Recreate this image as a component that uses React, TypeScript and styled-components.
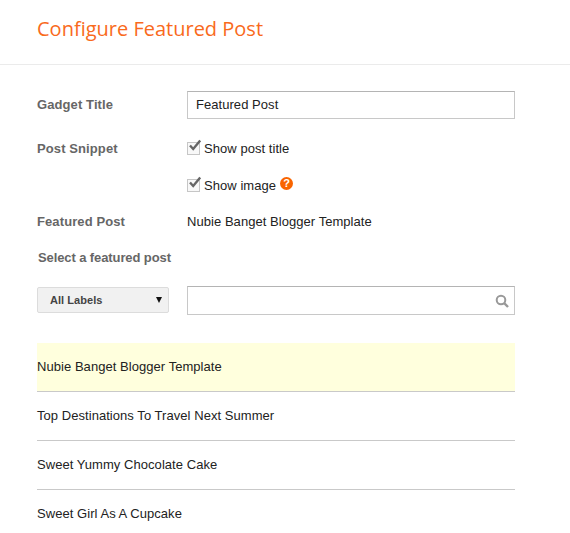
import React from "react";
import styled, { createGlobalStyle } from "styled-components";

const Global = createGlobalStyle`
    html, body {
        margin: 0;
        padding: 0;
        background: #fff;
        font-family: "Liberation Sans", Arial, sans-serif;
        overflow: hidden;
    }
`;

const POSTS = [
    "Nubie Banget Blogger Template",
    "Top Destinations To Travel Next Summer",
    "Sweet Yummy Chocolate Cake",
    "Sweet Girl As A Cupcake",
];

function Check() {
    return (
        <CheckBox>
            <svg width="15" height="14" viewBox="0 0 15 14">
                <path d="M3 6.5 L6.2 10 L13.2 1.5" fill="none" stroke="#666" strokeWidth="2.4" />
            </svg>
        </CheckBox>
    );
}

export default function App() {
    return (
        <Page>
            <Global />
            <Header>
                <Heading>Configure Featured Post</Heading>
            </Header>
            <Body>
                <Row $height={28} $mb={19}>
                    <Label $up={2}>Gadget Title</Label>
                    <TextInput>Featured Post</TextInput>
                </Row>
                <Row $height={20} $mb={17}>
                    <Label>Post Snippet</Label>
                    <CheckLine><Check />Show post title</CheckLine>
                </Row>
                <Row $height={20} $mb={16}>
                    <Label />
                    <CheckLine>
                        <Check />Show image
                        <Help>?</Help>
                    </CheckLine>
                </Row>
                <Row $height={20} $mb={19}>
                    <Label>Featured Post</Label>
                    <Value>Nubie Banget Blogger Template</Value>
                </Row>
                <SelectHeading>Select a featured post</SelectHeading>
                <Row $height={29} $mb={28}>
                    <LabelSelect>
                        All Labels
                        <Arrow />
                    </LabelSelect>
                    <SearchInput>
                        <svg width="14" height="14" viewBox="0 0 14 14">
                            <circle cx="6" cy="6" r="4.3" fill="none" stroke="#999" strokeWidth="2" />
                            <path d="M9.2 9.2 L13 13" stroke="#999" strokeWidth="2.4" />
                        </svg>
                    </SearchInput>
                </Row>
                <PostList>
                    {POSTS.map((title, i) => (
                        <PostItem key={title} $selected={i === 0}>{title}</PostItem>
                    ))}
                </PostList>
            </Body>
        </Page>
    );
}

const Page = styled.div`
    width: 570px;
    height: 533px;
    overflow: hidden;
    color: #222;
    font-size: 13px;
    letter-spacing: 0.05px;
`;

const Header = styled.div`
    box-sizing: content-box;
    height: 57px;
    padding: 0 0 7px 37px;
    border-bottom: 1px solid #ebebeb;
    display: flex;
    align-items: center;
`;

const Heading = styled.h1`
    margin: 0;
    font-size: 20px;
    font-weight: 400;
    color: #f96a1c;
    font-family: "Open Sans", sans-serif;
    letter-spacing: 0;
`;

const Body = styled.div`
    padding: 26px 55px 0 37px;
`;

const Row = styled.div<{ $height: number; $mb: number }>`
    display: flex;
    align-items: center;
    height: ${p => p.$height}px;
    margin-bottom: ${p => p.$mb}px;
`;

const Label = styled.div<{ $up?: number }>`
    width: 150px;
    flex: none;
    font-size: 13px;
    font-weight: 700;
    color: #666;
    letter-spacing: 0.1px;
    margin-bottom: ${p => p.$up ?? 0}px;
`;

const TextInput = styled.div`
    box-sizing: border-box;
    flex: 1;
    height: 28px;
    border: 1px solid #c8c8c8;
    border-top-color: #b4b4b4;
    padding-left: 8px;
    line-height: 26px;
`;

const CheckLine = styled.div`
    display: flex;
    align-items: center;
`;

const CheckBox = styled.span`
    position: relative;
    box-sizing: border-box;
    width: 13px;
    height: 13px;
    margin-right: 4px;
    border: 1px solid #c6c6c6;
    background: #f8f8f8;

    svg {
        position: absolute;
        left: -1px;
        top: -4px;
    }
`;

const Help = styled.span`
    width: 13px;
    height: 13px;
    margin-left: 4px;
    margin-top: -3px;
    border-radius: 50%;
    background: #f96400;
    color: #fff;
    font-size: 11px;
    font-weight: 700;
    line-height: 13px;
    text-align: center;
`;

const Value = styled.div``;

const SelectHeading = styled.div`
    margin: 0 0 20px 1px;
    height: 16px;
    font-size: 13px;
    font-weight: 700;
    color: #666;
    line-height: 16px;
    letter-spacing: -0.1px;
`;

const LabelSelect = styled.div`
    box-sizing: border-box;
    width: 132px;
    height: 26px;
    flex: none;
    align-self: flex-start;
    margin: 1px 18px 0 0;
    padding: 0 6px 0 12px;
    display: flex;
    align-items: center;
    justify-content: space-between;
    background: #f1f1f1;
    border: 1px solid #dcdcdc;
    border-radius: 2px;
    font-size: 11px;
    font-weight: 700;
    color: #444;
`;

const Arrow = styled.span`
    width: 0;
    height: 0;
    border-left: 3px solid transparent;
    border-right: 3px solid transparent;
    border-top: 6px solid #111;
`;

const SearchInput = styled.div`
    box-sizing: border-box;
    flex: 1;
    height: 29px;
    border: 1px solid #c8c8c8;
    border-top-color: #b4b4b4;
    padding-right: 5px;
    display: flex;
    align-items: center;
    justify-content: flex-end;
`;

const PostList = styled.div`
    display: flex;
    flex-direction: column;
`;

const PostItem = styled.div<{ $selected: boolean }>`
    box-sizing: border-box;
    height: 49px;
    line-height: 47px;
    border-bottom: 1px solid #c9c9c9;
    background: ${p => (p.$selected ? "#ffffdd" : "transparent")};

    &:last-child {
        border-bottom: none;
    }
`;
